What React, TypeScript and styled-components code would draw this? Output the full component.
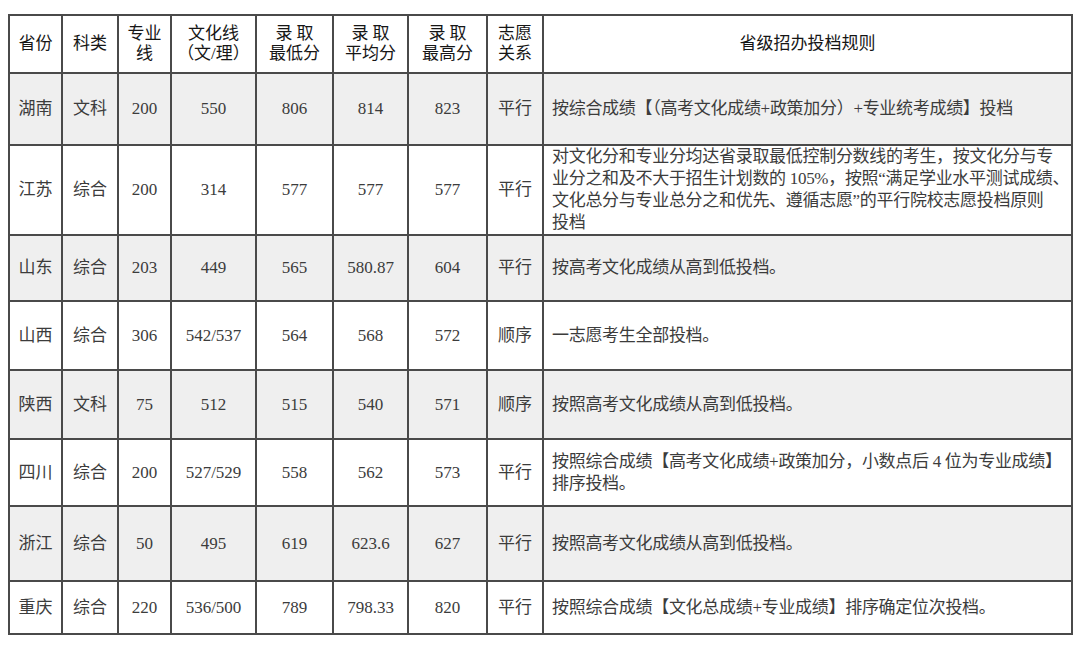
import React from "react";
import styled, { createGlobalStyle } from "styled-components";

const GlobalStyle = createGlobalStyle`
  body {
    margin: 0;
    background: #ffffff;
  }
`;

const Page = styled.main`
  padding: 14px 0 0 8px;
  font-family: "Liberation Serif", "Noto Sans CJK SC", serif;
`;

const Table = styled.table`
  width: 1063px;
  table-layout: fixed;
  border-collapse: collapse;
  border: 2px solid #4a4a4a;
  font-size: 17px;
  color: #3c3c3c;
`;

const Row = styled.tr<{ $shade?: boolean; $h: number }>`
  height: ${(p) => p.$h}px;
  background: ${(p) => (p.$shade ? "#efefef" : "#ffffff")};
`;

const HeadCell = styled.th`
  border: 2px solid #4a4a4a;
  padding: 0 2px;
  font-weight: normal;
  color: #161616;
  line-height: 20px;
  text-align: center;
  vertical-align: middle;
`;

const Cell = styled.td<{ $rule?: boolean }>`
  border: 2px solid #4a4a4a;
  padding: ${(p) => (p.$rule ? "0 2px 0 8px" : "0 2px")};
  line-height: 22px;
  text-align: ${(p) => (p.$rule ? "left" : "center")};
  vertical-align: middle;
  white-space: nowrap;
  overflow: hidden;
  letter-spacing: ${(p) => (p.$rule ? "-0.3px" : "0")};
`;

const widths = [53, 56, 53, 85, 77, 75, 79, 56, 529];

type Entry = {
  prov: string;
  kind: string;
  major: string;
  culture: string;
  min: string;
  avg: string;
  max: string;
  rel: string;
  rule: string[];
  h: number;
};

const rows: Entry[] = [
  {
    prov: "湖南", kind: "文科", major: "200", culture: "550", min: "806", avg: "814", max: "823", rel: "平行",
    rule: ["按综合成绩【（高考文化成绩+政策加分）+专业统考成绩】投档"], h: 72,
  },
  {
    prov: "江苏", kind: "综合", major: "200", culture: "314", min: "577", avg: "577", max: "577", rel: "平行",
    rule: [
      "对文化分和专业分均达省录取最低控制分数线的考生，按文化分与专",
      "业分之和及不大于招生计划数的 105%，按照“满足学业水平测试成绩、",
      "文化总分与专业总分之和优先、遵循志愿”的平行院校志愿投档原则",
      "投档",
    ],
    h: 87,
  },
  {
    prov: "山东", kind: "综合", major: "203", culture: "449", min: "565", avg: "580.87", max: "604", rel: "平行",
    rule: ["按高考文化成绩从高到低投档。"], h: 66,
  },
  {
    prov: "山西", kind: "综合", major: "306", culture: "542/537", min: "564", avg: "568", max: "572", rel: "顺序",
    rule: ["一志愿考生全部投档。"], h: 69,
  },
  {
    prov: "陕西", kind: "文科", major: "75", culture: "512", min: "515", avg: "540", max: "571", rel: "顺序",
    rule: ["按照高考文化成绩从高到低投档。"], h: 69,
  },
  {
    prov: "四川", kind: "综合", major: "200", culture: "527/529", min: "558", avg: "562", max: "573", rel: "平行",
    rule: ["按照综合成绩【高考文化成绩+政策加分，小数点后 4 位为专业成绩】", "排序投档。"], h: 67,
  },
  {
    prov: "浙江", kind: "综合", major: "50", culture: "495", min: "619", avg: "623.6", max: "627", rel: "平行",
    rule: ["按照高考文化成绩从高到低投档。"], h: 75,
  },
  {
    prov: "重庆", kind: "综合", major: "220", culture: "536/500", min: "789", avg: "798.33", max: "820", rel: "平行",
    rule: ["按照综合成绩【文化总成绩+专业成绩】排序确定位次投档。"], h: 53,
  },
];

export default function App() {
  return (
    <Page>
      <GlobalStyle />
      <Table>
        <colgroup>
          {widths.map((w, i) => (
            <col key={i} style={{ width: w }} />
          ))}
        </colgroup>
        <thead>
          <Row $h={58}>
            <HeadCell>省份</HeadCell>
            <HeadCell>科类</HeadCell>
            <HeadCell>专业<br />线</HeadCell>
            <HeadCell>文化线<br />（文/理）</HeadCell>
            <HeadCell>录 取<br />最低分</HeadCell>
            <HeadCell>录 取<br />平均分</HeadCell>
            <HeadCell>录 取<br />最高分</HeadCell>
            <HeadCell>志愿<br />关系</HeadCell>
            <HeadCell>省级招办投档规则</HeadCell>
          </Row>
        </thead>
        <tbody>
          {rows.map((r, i) => (
            <Row key={r.prov} $h={r.h} $shade={i % 2 === 0}>
              <Cell>{r.prov}</Cell>
              <Cell>{r.kind}</Cell>
              <Cell>{r.major}</Cell>
              <Cell>{r.culture}</Cell>
              <Cell>{r.min}</Cell>
              <Cell>{r.avg}</Cell>
              <Cell>{r.max}</Cell>
              <Cell>{r.rel}</Cell>
              <Cell $rule>
                {r.rule.map((line, j) => (
                  <React.Fragment key={j}>
                    {j > 0 && <br />}
                    {line}
                  </React.Fragment>
                ))}
              </Cell>
            </Row>
          ))}
        </tbody>
      </Table>
    </Page>
  );
}
